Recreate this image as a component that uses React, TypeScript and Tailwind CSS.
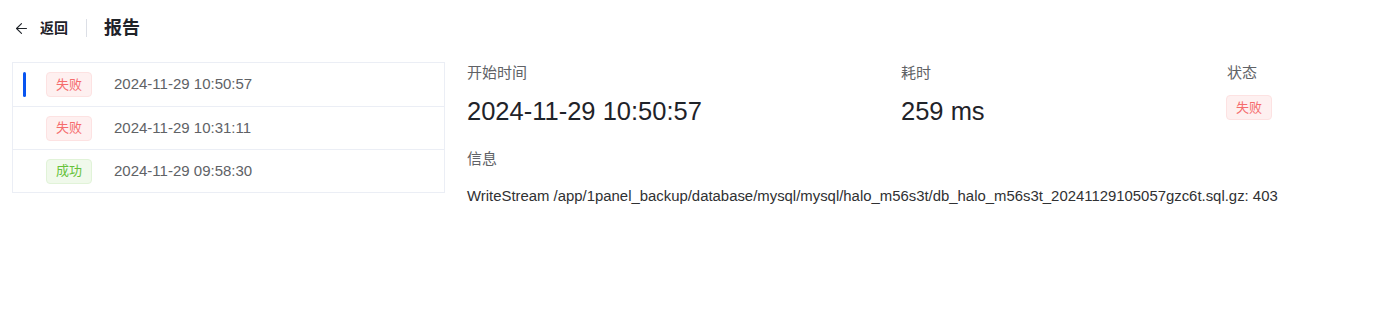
import { ArrowLeft } from "lucide-react";

const records = [
  { status: "fail", time: "2024-11-29 10:50:57", active: true },
  { status: "fail", time: "2024-11-29 10:31:11", active: false },
  { status: "ok", time: "2024-11-29 09:58:30", active: false },
];

function Tag({ status }: { status: string }) {
  const fail = status === "fail";
  return (
    <span
      className={`inline-flex h-[25px] w-[46px] items-center justify-center rounded border text-[13px] ${
        fail
          ? "border-[#fde2e2] bg-[#fef0f0] text-[#f56c6c]"
          : "border-[#e1f3d8] bg-[#f0f9eb] text-[#67c23a]"
      }`}
    >
      {fail ? "失败" : "成功"}
    </span>
  );
}

export default function App() {
  return (
    <div
      className="h-[312px] w-[1380px] bg-white text-[#303133]"
      style={{ fontFamily: '"Liberation Sans", Arial, "Noto Sans CJK SC", sans-serif' }}
    >
      <div className="flex h-[56px] items-center pl-[13px]">
        <button className="flex items-center gap-[10px] text-[14px] font-bold text-[#1f2329]">
          <ArrowLeft className="h-[17px] w-[17px]" strokeWidth={1.5} />
          <span>返回</span>
        </button>
        <div className="ml-[18px] mr-[17px] h-[18px] w-px bg-[#dcdfe6]" />
        <h1 className="text-[18px] font-bold text-[#1f2329]">报告</h1>
      </div>

      <div className="flex items-start pl-[12px] pt-[6px]">
        <div className="w-[433px] border border-[#ebeef5]">
          {records.map((r, i) => (
            <div
              key={i}
              className={`flex h-[43px] items-center ${i > 0 ? "border-t border-[#ebeef5]" : ""}`}
            >
              <div className="flex w-[33px] justify-center">
                {r.active && <div className="ml-[-10px] h-[25px] w-[3px] rounded-sm bg-[#0854f0]" />}
              </div>
              <Tag status={r.status} />
              <span className="ml-[22px] text-[15px] text-[#606266]">{r.time}</span>
            </div>
          ))}
        </div>

        <div className="ml-[22px] flex-1 pt-[1px]">
          <div className="flex">
            <div className="w-[434px]">
              <div className="text-[15px] leading-[20px] text-[#606266]">开始时间</div>
              <div className="mt-[13px] text-[25.5px] leading-[30px] text-[#1f2329]">2024-11-29 10:50:57</div>
            </div>
            <div className="w-[326px]">
              <div className="text-[15px] leading-[20px] text-[#606266]">耗时</div>
              <div className="mt-[13px] text-[25.5px] leading-[30px] text-[#1f2329]">259 ms</div>
            </div>
            <div>
              <div className="text-[15px] leading-[20px] text-[#606266]">状态</div>
              <div className="mt-[12px] -ml-px">
                <Tag status="fail" />
              </div>
            </div>
          </div>
          <div className="mt-[23px] text-[15px] leading-[20px] text-[#606266]">信息</div>
          <div className="mt-[17px] text-[14.9px] leading-[20px] text-[#303133]">
            WriteStream /app/1panel_backup/database/mysql/mysql/halo_m56s3t/db_halo_m56s3t_20241129105057gzc6t.sql.gz: 403
          </div>
        </div>
      </div>
    </div>
  );
}
